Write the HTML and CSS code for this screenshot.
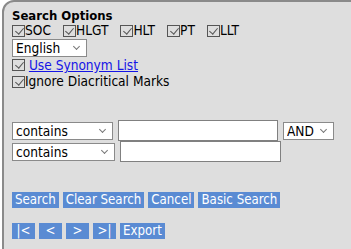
FILE: index.html
```html
<!DOCTYPE html>
<html lang="en">
<head>
    <meta charset="UTF-8">
    <title>Search Options</title>
    <link rel="stylesheet" href="styles.css">
</head>
<body>
    <div class="panel">
        <h3 class="title">Search Options</h3>
        <div class="levels">
            <label><input type="checkbox" checked>SOC</label>
            <label><input type="checkbox" checked>HLGT</label>
            <label><input type="checkbox" checked>HLT</label>
            <label><input type="checkbox" checked>PT</label>
            <label><input type="checkbox" checked>LLT</label>
        </div>
        <div class="lang-row">
            <span class="sel lang">
                <select><option>English</option></select>
            </span>
        </div>
        <div class="check synonym">
            <input type="checkbox" checked>&nbsp;<a href="#">Use Synonym List</a>
        </div>
        <div class="check ignore">
            <label><input type="checkbox" checked>Ignore Diacritical Marks</label>
        </div>

        <div class="criteria">
            <div class="crit-row">
                <span class="sel op"><select><option>contains</option></select></span>
                <input type="text" class="term">
                <span class="sel join"><select><option>AND</option></select></span>
            </div>
            <div class="crit-row second">
                <span class="sel op"><select><option>contains</option></select></span>
                <input type="text" class="term">
            </div>
        </div>

        <div class="actions">
            <button>Search</button>
            <button>Clear Search</button>
            <button>Cancel</button>
            <button>Basic Search</button>
        </div>
        <div class="pager">
            <button class="nav">|&lt;</button>
            <button class="nav">&lt;</button>
            <button class="nav">&gt;</button>
            <button class="nav">&gt;|</button>
            <button>Export</button>
        </div>
    </div>
</body>
</html>
```

FILE: styles.css
```css
* {
    box-sizing: border-box;
}

body {
    margin: 0;
    background: #fff;
    font-family: "DejaVu Sans Condensed", "DejaVu Sans", sans-serif;
    font-size: 13.6px;
    color: #000;
    overflow: hidden;
}

.panel {
    margin-left: 2px;
    width: 420px;
    height: 300px;
    background: #dedede;
    border: 2px solid #8a8a8a;
    border-top-left-radius: 12px;
    padding: 6px 8px;
}

.title {
    margin: 0;
    font-size: 13px;
    font-weight: bold;
    line-height: 16px;
}

/* checkbox rows */
.levels {
    display: flex;
    gap: 12px;
    height: 13px;
    line-height: 13px;
}

label {
    display: inline-flex;
    align-items: center;
}

input[type="checkbox"] {
    appearance: none;
    width: 13px;
    height: 12px;
    margin: 0;
    border: 1px solid #555;
    background: transparent;
    position: relative;
    vertical-align: -1px;
}

input[type="checkbox"]:checked::after {
    content: "";
    position: absolute;
    left: 3.5px;
    top: 0;
    width: 4px;
    height: 7px;
    border-right: 1.5px solid #555;
    border-bottom: 1.5px solid #555;
    transform: rotate(40deg);
}

.check {
    height: 13px;
    line-height: 13px;
}

.synonym {
    margin-top: 2px;
}

.ignore {
    margin-top: 3px;
}

a {
    color: #1414e6;
}

/* selects with a thin chevron */
.sel {
    position: relative;
    display: inline-block;
}

.sel select {
    appearance: none;
    width: 100%;
    height: 100%;
    font-family: inherit;
    font-size: 13.6px;
    background: #fff;
    border: 1px solid #8a8a8a;
    border-radius: 0;
    color: #000;
    margin: 0;
    padding: 0 0 0 3px;
}

.sel::after {
    content: "";
    position: absolute;
    right: 8px;
    top: 5px;
    width: 4px;
    height: 4px;
    border-right: 1px solid #777;
    border-bottom: 1px solid #777;
    transform: rotate(45deg);
    pointer-events: none;
}

.lang-row {
    margin-top: 2px;
    height: 18px;
}

.lang {
    width: 75px;
    height: 18px;
}

/* search criteria */
.criteria {
    margin-top: 32px;
}

.crit-row {
    display: flex;
    align-items: center;
    gap: 5px;
    height: 21px;
}

.op {
    width: 101px;
    height: 18px;
}

.term {
    width: 160px;
    height: 21px;
    border: 1px solid #808080;
    background: #fff;
    margin: 0;
}

.join {
    width: 51px;
    height: 18px;
}

.second .op {
    width: 103px;
}

.second .term {
    width: 161px;
}

/* buttons */
button {
    font-family: inherit;
    font-size: 13.2px;
    color: #fff;
    background: #5a8bd3;
    border: none;
    height: 16px;
    line-height: 16px;
    padding: 0 3px;
    margin: 0;
}

.actions {
    display: flex;
    gap: 4px;
    margin-top: 30px;
}

.pager {
    display: flex;
    gap: 4px;
    margin-top: 15px;
}

.nav {
    width: 23px;
}
```
